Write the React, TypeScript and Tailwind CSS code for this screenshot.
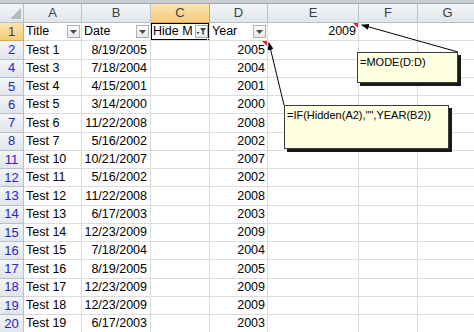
import React from 'react';

type Row = { num: string; title: string; date: string; year: string };

const rows: Row[] = [
  { num: '2', title: 'Test 1', date: '8/19/2005', year: '2005' },
  { num: '4', title: 'Test 3', date: '7/18/2004', year: '2004' },
  { num: '5', title: 'Test 4', date: '4/15/2001', year: '2001' },
  { num: '6', title: 'Test 5', date: '3/14/2000', year: '2000' },
  { num: '7', title: 'Test 6', date: '11/22/2008', year: '2008' },
  { num: '8', title: 'Test 7', date: '5/16/2002', year: '2002' },
  { num: '11', title: 'Test 10', date: '10/21/2007', year: '2007' },
  { num: '12', title: 'Test 11', date: '5/16/2002', year: '2002' },
  { num: '13', title: 'Test 12', date: '11/22/2008', year: '2008' },
  { num: '14', title: 'Test 13', date: '6/17/2003', year: '2003' },
  { num: '15', title: 'Test 14', date: '12/23/2009', year: '2009' },
  { num: '16', title: 'Test 15', date: '7/18/2004', year: '2004' },
  { num: '17', title: 'Test 16', date: '8/19/2005', year: '2005' },
  { num: '18', title: 'Test 17', date: '12/23/2009', year: '2009' },
  { num: '19', title: 'Test 18', date: '12/23/2009', year: '2009' },
  { num: '20', title: 'Test 19', date: '6/17/2003', year: '2003' },
];

const cell = 'h-full shrink-0 border-r border-b border-[#dadcdd] overflow-hidden whitespace-nowrap';
const hdr = 'h-full shrink-0 border-r border-b border-[#b9bfc7] bg-gradient-to-b from-[#f3f5f8] to-[#e1e5ea] flex items-center justify-center text-[13px] text-[#3b3f45]';

const FilterButton = ({ active = false }: { active?: boolean }) => (
  <div className="w-[13px] h-[13px] shrink-0 border border-[#a9b0b9] bg-gradient-to-b from-[#ffffff] to-[#e4e7eb] flex items-center justify-center">
    {active ? (
      <svg width="11" height="9" viewBox="0 0 11 9">
        <path d="M0.5 5 L3.5 5 L2 7 Z" fill="#333" />
        <path d="M4 1 L10 1 L7.8 4 L7.8 8 L6.2 7 L6.2 4 Z" fill="#444" />
      </svg>
    ) : (
      <svg width="7" height="4" viewBox="0 0 7 4">
        <path d="M0 0 L7 0 L3.5 4 Z" fill="#4a4a4a" />
      </svg>
    )}
  </div>
);

const RedMark = () => (
  <svg className="absolute right-0 top-0" width="5" height="5" viewBox="0 0 5 5">
    <path d="M0 0 L5 0 L5 5 Z" fill="#e0202a" />
  </svg>
);

export default function App() {
  return (
    <div
      className="relative w-[474px] h-[332px] overflow-hidden bg-white text-[12.5px] text-black"
      style={{ fontFamily: '"Liberation Sans", Arial, sans-serif' }}
    >
      <div className="h-[4px] bg-[#c9cdd2] border-b border-[#a3a9b0]" />

      {/* column headers */}
      <div className="flex h-[19px]">
        <div className={`${hdr} w-[24px] relative`}>
          <svg className="absolute right-[2px] bottom-[3px]" width="11" height="11" viewBox="0 0 11 11">
            <path d="M11 0 L11 11 L0 11 Z" fill="#b4bac2" />
          </svg>
        </div>
        <div className={`${hdr} w-[58px]`}>A</div>
        <div className={`${hdr} w-[69px]`}>B</div>
        <div className={`${hdr} w-[59px] bg-gradient-to-b from-[#fbe3b0] to-[#f4cc7a] border-[#d7a954]`}>C</div>
        <div className={`${hdr} w-[58px]`}>D</div>
        <div className={`${hdr} w-[91px]`}>E</div>
        <div className={`${hdr} w-[59px]`}>F</div>
        <div className={`${hdr} w-[60px]`}>G</div>
      </div>

      {/* row 1 */}
      <div className="flex h-[18.25px]">
        <div className={`${hdr} w-[24px] bg-gradient-to-b from-[#fbe3b0] to-[#f4cc7a] border-[#d7a954] text-[#3a2f10]`}>1</div>
        <div className={`${cell} w-[58px] flex items-center pl-[2px] pr-[1px] justify-between`}>
          <span>Title</span>
          <FilterButton />
        </div>
        <div className={`${cell} w-[69px] flex items-center pl-[2px] pr-[1px] justify-between`}>
          <span>Date</span>
          <FilterButton />
        </div>
        <div className={`${cell} w-[59px] relative flex items-center pl-[2px] pr-[1px] justify-between`}>
          <span>Hide M</span>
          <FilterButton active />
          <div className="absolute inset-[-1px] border-2 border-black pointer-events-none" />
          <div className="absolute right-[-3px] bottom-[-3px] w-[5px] h-[5px] bg-black border border-white" />
        </div>
        <div className={`${cell} w-[58px] flex items-center pl-[2px] pr-[1px] justify-between`}>
          <span>Year</span>
          <FilterButton />
        </div>
        <div className={`${cell} w-[91px] relative flex items-center justify-end pr-[2px]`}>
          2009
          <RedMark />
        </div>
        <div className={`${cell} w-[59px]`} />
        <div className={`${cell} w-[60px]`} />
      </div>

      {rows.map((r, i) => (
        <div key={r.num} className="flex h-[18.25px]">
          <div className={`${hdr} w-[24px] text-[#2424c8]`}>{r.num}</div>
          <div className={`${cell} w-[58px] flex items-center pl-[2px]`}>{r.title}</div>
          <div className={`${cell} w-[69px] flex items-center justify-end pr-[3px]`}>{r.date}</div>
          <div className={`${cell} w-[59px]`} />
          <div className={`${cell} w-[58px] relative flex items-center justify-end pr-[2px]`}>
            {r.year}
            {i === 0 && <RedMark />}
          </div>
          <div className={`${cell} w-[91px]`} />
          <div className={`${cell} w-[59px]`} />
          <div className={`${cell} w-[60px]`} />
        </div>
      ))}

      {/* comment arrows */}
      <svg className="absolute left-0 top-0 pointer-events-none" width="474" height="332">
        <defs>
          <marker id="ah" markerWidth="8" markerHeight="6" refX="7" refY="3" orient="auto">
            <path d="M0 0 L8 3 L0 6 Z" fill="#000" />
          </marker>
        </defs>
        <line x1="458" y1="52" x2="362" y2="25" stroke="#000" strokeWidth="1" markerEnd="url(#ah)" />
        <line x1="284" y1="105" x2="269" y2="43" stroke="#000" strokeWidth="1" markerEnd="url(#ah)" />
      </svg>

      {/* comments */}
      <div className="absolute left-[357px] top-[52px] w-[101px] h-[31px] bg-[#ffffe1] border border-[#3c3c3c] shadow-[3px_3px_0_#1a1a1a] px-[2px] pt-[2px] text-[11px] leading-[14px]">
        =MODE(D:D)
      </div>
      <div className="absolute left-[284px] top-[105px] w-[165px] h-[44px] bg-[#ffffe1] border border-[#3c3c3c] shadow-[3px_3px_0_#1a1a1a] px-[2px] pt-[2px] text-[11px] leading-[14px]">
        =IF(Hidden(A2),"",YEAR(B2))
      </div>
    </div>
  );
}
